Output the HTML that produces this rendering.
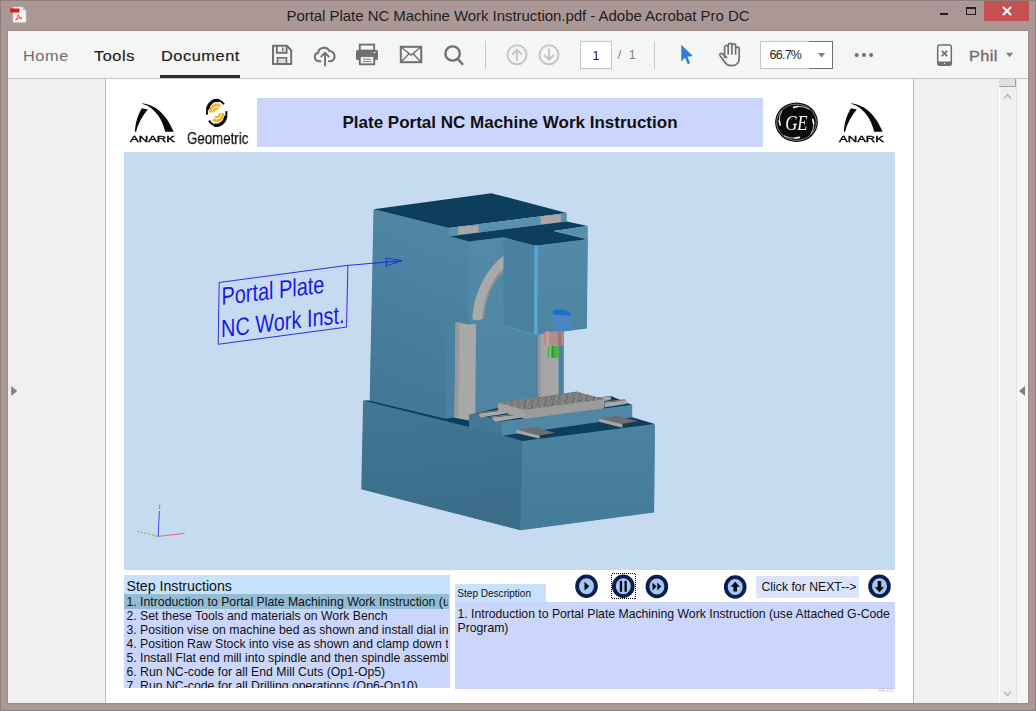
<!DOCTYPE html>
<html>
<head>
<meta charset="utf-8">
<title>Portal Plate NC Machine Work Instruction.pdf - Adobe Acrobat Pro DC</title>
<style>
*{box-sizing:border-box;margin:0;padding:0}
html,body{width:1036px;height:711px;overflow:hidden}
body{position:relative;background:#ab9896;font-family:"Liberation Sans",sans-serif;color:#1e1e1e}
.abs{position:absolute}
#frame{left:0;top:0;width:1036px;height:711px;border:1px solid #8e7f7d;background:#ab9896}
#title{left:0;top:0;width:1036px;height:31px;text-align:center;font-size:15px;line-height:31px;color:#1e1e1e;letter-spacing:-0.04px;white-space:nowrap}
#client{left:8px;top:31px;width:1020px;height:672px;background:#f0f0f0;overflow:hidden}
#clientb{left:7px;top:30px;width:1022px;height:674px;background:#9c8b89}
#toolbar{left:0;top:0;width:1020px;height:48px;background:#f5f5f5;border-bottom:1px solid #c6c6c6}
.tab{top:1px;height:47px;line-height:47.500px;font-size:15px;letter-spacing:0.5px;white-space:nowrap;transform:scaleX(1.090);transform-origin:0 50%}
.sep{top:10px;width:1px;height:28px;background:#c8c8c8}
#page{left:97px;top:48px;width:809px;height:624px;background:#fff;border-left:1px solid #b9b9b9;border-right:1px solid #b9b9b9}

#doc{left:0;top:0;width:1036px;height:703px;overflow:hidden;pointer-events:none}
.logo-t{white-space:nowrap;transform-origin:0 0;color:#111;line-height:1;will-change:transform}
#hdr{left:257px;top:98px;width:506px;height:49px;background:#cad6fe}
#hdrt{left:257px;top:98px;width:506px;height:49px;line-height:49px;font-weight:bold;font-size:17px;white-space:nowrap;color:#111;padding-left:85.500px}
.lb{background:#cbd6fc}
.row{position:absolute;left:0;width:324px;height:14.050px;line-height:14.050px;font-size:12.250px;white-space:nowrap;overflow:hidden;padding-left:2.500px;color:#111}
</style>
</head>
<body>
<div id="frame" class="abs"></div>
<div id="title" class="abs">Portal Plate NC Machine Work Instruction.pdf - Adobe Acrobat Pro DC</div>

<!-- title bar icon -->
<svg class="abs" style="left:9px;top:6px" width="18" height="18" viewBox="0 0 18 18">
  <path d="M4 1h9.500l3.500 3.500V16.500H4z" fill="#f4f4f4" stroke="#c9c3c2" stroke-width="0.6"/>
  <path d="M13.500 1v3.500h3.500z" fill="#c8c8c8"/>
  <rect x="1" y="2.5" width="9.5" height="4" fill="#e01b0c"/>
  <path d="M6.5 14.2c1.6-1.6 2.6-3.6 2.7-5.6M9.2 8.6c.5 2 1.800 3.200 3.600 3.500M6.500 14c1.800-1.300 4-2 6.300-1.900" fill="none" stroke="#e8302a" stroke-width="0.9"/>
</svg>

<!-- window controls -->
<div class="abs" style="left:940px;top:13px;width:8px;height:2px;background:#1e1e1e"></div>
<div class="abs" style="left:966px;top:7px;width:10px;height:8px;border:1px solid #1e1e1e;border-top-width:2px"></div>
<div class="abs" style="left:984px;top:1px;width:45px;height:20px;background:#c75050"></div>
<svg class="abs" style="left:1001px;top:5px" width="12" height="12" viewBox="0 0 12 12"><path d="M2 2l8 8M10 2l-8 8" stroke="#fff" stroke-width="2" fill="none"/></svg>

<div id="clientb" class="abs"></div>
<div id="client" class="abs">
  <div id="toolbar" class="abs">
    <div class="abs tab" style="left:14.500px;color:#6e6e6e">Home</div>
    <div class="abs tab" style="left:85.500px;color:#1e1e1e;-webkit-text-stroke:0.2px #1e1e1e">Tools</div>
    <div class="abs tab" style="left:152.500px;color:#1e1e1e;-webkit-text-stroke:0.2px #1e1e1e">Document</div>
    <div class="abs" style="left:152px;top:44px;width:80px;height:3px;background:#2c2c2c"></div>
    <div class="abs sep" style="left:477px"></div>
    <div class="abs sep" style="left:646px"></div>
    <div class="abs tab" style="left:961px;color:#707070;-webkit-text-stroke:0.4px #707070;letter-spacing:0.35px">Phil</div>
    <!-- save -->
    <svg class="abs" style="left:263px;top:13px" width="22" height="22" viewBox="271 44 22 22">
      <path d="M273 45.800h13.800l4.400 4.400v13.900h-18.200z" fill="none" stroke="#707070" stroke-width="2" stroke-linejoin="round"/>
      <path d="M276.800 46v6.800h9.800V46" fill="none" stroke="#707070" stroke-width="1.900"/>
      <rect x="282" y="47.500" width="1.500" height="3.500" fill="#707070"/>
      <rect x="277.500" y="57.800" width="9" height="6" fill="#dcdcdc" stroke="#707070" stroke-width="1.600"/>
    </svg>
    <!-- cloud upload -->
    <svg class="abs" style="left:305px;top:13px" width="24" height="24" viewBox="313 44 24 24">
      <path d="M320.500 61.200h-1.700a4.300 4.300 0 0 1-.6-8.500a6 6 0 0 1 11.300-1.700a5.200 5.200 0 0 1 1.200 10.200h-1.700" fill="none" stroke="#707070" stroke-width="2" stroke-linecap="round"/>
      <path d="M325 65.500v-12M321.200 56.600l3.800-3.900 3.800 3.900" fill="none" stroke="#707070" stroke-width="1.900" stroke-linecap="round" stroke-linejoin="round"/>
    </svg>
    <!-- print -->
    <svg class="abs" style="left:347px;top:12px" width="24" height="24" viewBox="355 43 24 24">
      <rect x="356" y="50" width="22" height="10" rx="1.500" fill="#707070"/>
      <rect x="359.800" y="44.600" width="14.400" height="6" fill="#f5f5f5" stroke="#707070" stroke-width="1.900"/>
      <rect x="359.800" y="56" width="14.400" height="8.300" fill="#f0f0f0" stroke="#707070" stroke-width="1.900"/>
      <path d="M363 59.200h8M363 61.500h8" stroke="#707070" stroke-width="0.900"/>
      <rect x="373.500" y="52" width="2" height="1" fill="#f5f5f5"/>
    </svg>
    <!-- mail -->
    <svg class="abs" style="left:391px;top:14px" width="24" height="20" viewBox="399 45 24 20">
      <rect x="400.800" y="46.800" width="20.400" height="15.400" fill="none" stroke="#707070" stroke-width="2"/>
      <path d="M401 47l10 8 10-8M401 62l8-8.300M421 62l-8-8.300" fill="none" stroke="#707070" stroke-width="1.400"/>
    </svg>
    <!-- search -->
    <svg class="abs" style="left:435px;top:12px" width="24" height="24" viewBox="443 43 24 24">
      <circle cx="452.600" cy="53.500" r="7.200" fill="none" stroke="#707070" stroke-width="2.300"/>
      <path d="M457.800 59l4.600 5" stroke="#707070" stroke-width="2.400" stroke-linecap="round"/>
    </svg>
    <!-- page up/down -->
    <svg class="abs" style="left:497px;top:12px" width="56" height="24" viewBox="505 43 56 24">
      <g fill="none" stroke="#c6c6c6" stroke-width="2" stroke-linecap="round" stroke-linejoin="round">
        <circle cx="517" cy="54.800" r="9.500"/>
        <path d="M517 60v-10M512.800 54l4.200-4.200 4.200 4.200"/>
        <circle cx="549" cy="54.800" r="9.500"/>
        <path d="M549 49.500v10M544.800 55.500l4.200 4.200 4.200-4.200"/>
      </g>
    </svg>
    <div class="abs" style="left:572px;top:10px;width:32px;height:28px;background:#fff;border:1px solid #c4c4c4;text-align:center;font-size:12.500px;line-height:28.500px;color:#1e1e1e">1</div>
    <div class="abs" style="left:609.800px;top:10px;height:28px;font-size:12.500px;line-height:28.500px;color:#808080;white-space:pre;letter-spacing:0.2px">/  1</div>
    <!-- cursor -->
    <svg class="abs" style="left:671px;top:12px" width="16" height="24" viewBox="679 43 16 24">
      <path d="M681.300 44.800V61.400L685 57.700l2.800 6.500 2.300-1-2.700-6.500 5.400-.6z" fill="#2d80d8"/>
    </svg>
    <!-- hand -->
    <svg class="abs" style="left:709px;top:11px" width="26" height="26" viewBox="717 42 26 26">
      <path d="M724.600 57.500V47.300a1.800 1.800 0 0 1 3.600 0V54M728.200 54V45.300a1.850 1.850 0 0 1 3.700 0V54M731.900 54V45.700a1.850 1.850 0 0 1 3.700 0V54M735.600 54V48.900a1.800 1.800 0 0 1 3.600 0V58c0 4.800-3 7.700-7.600 7.700c-3.600 0-5.500-1.400-7.100-4l-4.500-6.200c-.9-1.500.9-2.900 2.300-1.800l4.300 3.800" fill="none" stroke="#707070" stroke-width="1.700" stroke-linejoin="round" stroke-linecap="round"/>
    </svg>
    <!-- zoom box -->
    <div class="abs" style="left:752px;top:10px;width:73px;height:28px;background:#fff;border:1px solid #c4c4c4"></div>
    <div class="abs" style="left:801px;top:10px;width:24px;height:28px;border:1px solid #707070;border-left:none"></div>
    <div class="abs" style="left:761.500px;top:10px;height:28px;font-size:12.500px;line-height:28.500px;color:#1e1e1e;letter-spacing:-0.75px">66.7%</div>
    <svg class="abs" style="left:809px;top:21px" width="9" height="6" viewBox="0 0 9 6"><path d="M1 1h7.200L4.600 5.400z" fill="#808080"/></svg>
    <!-- more -->
    <svg class="abs" style="left:845px;top:20px" width="24" height="8" viewBox="853 51 24 8"><g fill="#707070"><circle cx="856.700" cy="55.100" r="2"/><circle cx="864" cy="55.100" r="2"/><circle cx="871.100" cy="55.100" r="2"/></g></svg>
    <!-- mobile -->
    <svg class="abs" style="left:928px;top:12px" width="18" height="24" viewBox="936 43 18 24">
      <rect x="937.700" y="45" width="13.600" height="20.200" rx="2" fill="#f5f5f5" stroke="#707070" stroke-width="1.500"/>
      <path d="M937.700 61.600h13.600v2a1.600 1.600 0 0 1-1.600 1.600h-10.400a1.600 1.600 0 0 1-1.600-1.600z" fill="#707070"/>
      <rect x="944" y="62.800" width="1" height="1.200" fill="#f5f5f5"/>
      <path d="M941.800 50.800l5.400 5.400M947.200 50.800l-5.400 5.400" stroke="#707070" stroke-width="1.700"/>
    </svg>
    <svg class="abs" style="left:997px;top:21px" width="9" height="6" viewBox="0 0 9 6"><path d="M1 0.800h7.200L4.600 5.200z" fill="#808080"/></svg>

  </div>
  <div id="page" class="abs"></div>
  <!-- side arrows and scrollbar -->
  <svg class="abs" style="left:3px;top:354px" width="7" height="12" viewBox="0 0 7 12"><path d="M0.200 1v10l6-5z" fill="#808080"/></svg>
  <div class="abs" style="left:991px;top:48px;width:18px;height:624px;background:#f0f0f0;border-left:1px solid #fff;border-right:1px solid #e4e4e4"></div>
  <div class="abs" style="left:1009px;top:48px;width:11px;height:624px;background:#f5f5f5"></div>
  <div class="abs" style="left:991px;top:48px;width:17px;height:8px;background:#e1e1e1;border-bottom:1px solid #a0a0a0;border-right:1px solid #a0a0a0"></div>
  <svg class="abs" style="left:995px;top:61px" width="9" height="8" viewBox="0 0 9 8"><path d="M1 6.500l3.500-3.800L8 6.500" fill="none" stroke="#bdbdbd" stroke-width="1.800"/></svg>
  <svg class="abs" style="left:995px;top:659px" width="9" height="8" viewBox="0 0 9 8"><path d="M1 1.500l3.500 3.800L8 1.500" fill="none" stroke="#bdbdbd" stroke-width="1.800"/></svg>
  <svg class="abs" style="left:1010px;top:354px" width="8" height="12" viewBox="0 0 8 12"><path d="M7 1v10l-6-5z" fill="#808080"/></svg>

</div>

<div id="doc" class="abs">
  <!-- header logos -->
  <svg class="abs" style="left:128px;top:100px" width="52" height="36" viewBox="128 100 52 36">
    <path d="M141.400 103.400C152 103.200 166 112 173.600 131.800L165.200 131.800C162.500 120 156 110.500 147.500 105.800Z" fill="#0a0a0a"/>
    <path d="M142 108.200L147.800 109.600C142.500 116 138 124 136.200 131.800L134.900 131.800C135.300 122.500 138 114.200 142 108.200Z" fill="#0a0a0a"/>
  </svg>
  <div class="abs logo-t" style="left:130.200px;top:135.200px;font-size:9px;-webkit-text-stroke:0.45px #111;transform:scaleX(1.450)">ANARK</div>
  <svg class="abs" style="left:203px;top:97px" width="28" height="32" viewBox="203 97 28 32">
    <path d="M207.00 114.57A9.8 12.7 0 0 1 223.98 104.30" fill="none" stroke="#0a0a0a" stroke-width="2"/>
    <path d="M207.43 109.56A9.6 12.5 0 0 1 219.18 100.73" fill="none" stroke="#0a0a0a" stroke-width="3.200"/>
    <path d="M226.40 111.03A9.8 12.7 0 0 1 208.98 120.62" fill="none" stroke="#0a0a0a" stroke-width="2"/>
    <path d="M225.97 116.04A9.6 12.5 0 0 1 214.22 124.87" fill="none" stroke="#0a0a0a" stroke-width="3.200"/>
    <path d="M210.40 112.52A6.3 8.0 0 0 1 220.31 106.25" fill="none" stroke="#f6b21a" stroke-width="2.800"/>
    <path d="M213.41 112.43A3.3 4.3 0 0 1 218.35 109.08" fill="none" stroke="#f6b21a" stroke-width="2.200"/>
    <path d="M223.00 113.08A6.3 8.0 0 0 1 213.09 119.35" fill="none" stroke="#f6b21a" stroke-width="2.800"/>
    <path d="M219.99 113.17A3.3 4.3 0 0 1 215.05 116.52" fill="none" stroke="#f6b21a" stroke-width="2.200"/>
  </svg>
  <div class="abs logo-t" style="left:186.600px;top:129.600px;font-size:17.400px;-webkit-text-stroke:0.25px #111;transform:scaleX(0.765)">Geometric</div>
  <div id="hdr" class="abs"></div>
  <div id="hdrt" class="abs">Plate Portal NC Machine Work Instruction</div>
  <svg class="abs" style="left:774px;top:100px;will-change:transform" width="46" height="46" viewBox="774 100 46 46">
    <ellipse cx="796.500" cy="122.300" rx="21.400" ry="19.700" fill="#0a0a0a"/>
    <ellipse cx="796.500" cy="122.300" rx="19.800" ry="18.100" fill="none" stroke="#d8d8d8" stroke-width="0.550"/>
    <g fill="none" stroke="#f4f4f4" stroke-linecap="round">
      <path d="M793.6 107.3L797.7 106.5" stroke-width="1.700"/>
      <path d="M797.7 106.5A18.500 17 0 0 1 808.8 108.8" stroke-width="0.800"/>
      <path d="M812.8 119.7L813.7 123.4" stroke-width="1.700"/>
      <path d="M813.7 123.4A18.500 17 0 0 1 811.2 133.6" stroke-width="0.800"/>
      <path d="M799.4 137.3L795.3 138.1" stroke-width="1.700"/>
      <path d="M795.3 138.1A18.500 17 0 0 1 784.2 135.8" stroke-width="0.800"/>
      <path d="M780.2 124.9L779.3 121.2" stroke-width="1.700"/>
      <path d="M779.3 121.2A18.500 17 0 0 1 781.8 111.0" stroke-width="0.800"/>
    </g>
    <text x="796.400" y="130" text-anchor="middle" font-family="'Liberation Serif','DejaVu Serif',serif" font-style="italic" font-size="22" fill="#fff" textLength="22.500" lengthAdjust="spacingAndGlyphs">GE</text>
  </svg>
  <svg class="abs" style="left:837px;top:100px" width="52" height="36" viewBox="128 100 52 36">
    <path d="M141.400 103.400C152 103.200 166 112 173.600 131.800L165.200 131.800C162.500 120 156 110.500 147.500 105.800Z" fill="#0a0a0a"/>
    <path d="M142 108.200L147.800 109.600C142.500 116 138 124 136.200 131.800L134.900 131.800C135.300 122.500 138 114.200 142 108.200Z" fill="#0a0a0a"/>
  </svg>
  <div class="abs logo-t" style="left:839.200px;top:135.200px;font-size:9px;-webkit-text-stroke:0.45px #111;transform:scaleX(1.450)">ANARK</div>

  <!--SCENE_START-->
  <svg class="abs" style="left:124px;top:152px" width="771" height="418" viewBox="124 152 771 418">
    <defs>
      <linearGradient id="gLeft" x1="0.200" y1="0" x2="0" y2="1">
        <stop offset="0" stop-color="#4f87a3"/><stop offset="1" stop-color="#417595"/>
      </linearGradient>
      <linearGradient id="gFront" x1="0" y1="0" x2="0" y2="1">
        <stop offset="0" stop-color="#538ba7"/><stop offset="1" stop-color="#4d84a1"/>
      </linearGradient>
      <linearGradient id="gHead" x1="0" y1="0" x2="0" y2="1">
        <stop offset="0" stop-color="#538ba7"/><stop offset="1" stop-color="#4d84a1"/>
      </linearGradient>
      <linearGradient id="gBaseL" x1="0" y1="0" x2="0.150" y2="1">
        <stop offset="0" stop-color="#427895"/><stop offset="1" stop-color="#3b6d89"/>
      </linearGradient>
      <linearGradient id="gBaseF" x1="0" y1="0" x2="0" y2="1">
        <stop offset="0" stop-color="#4b83a0"/><stop offset="1" stop-color="#447b98"/>
      </linearGradient>
      <pattern id="grid" width="5.200" height="2.600" patternUnits="userSpaceOnUse" patternTransform="matrix(1 -0.145 0.9 0.250 498 403)">
        <rect width="5.200" height="2.600" fill="#989898"/>
        <rect x="0.400" y="0.300" width="3.800" height="1.900" fill="#666"/>
      </pattern>
    </defs>
    <rect x="124" y="152" width="771" height="418" fill="#c6dbf0"/>

    <!-- backing silhouette to hide seams -->
    <polygon points="374,210 469,241 587.500,239.500 586.600,328 563.400,331 563.400,396 604,399.500 632,405 632,417.500 654.500,424.500 654,512 520.500,530 362,489.300 363.500,401 370,400.400" fill="#4d84a1"/>
    <!-- base -->
    <polygon points="363.100,400.400 522.600,440.500 520.500,530.300 361.300,489.300" fill="url(#gBaseL)"/>
    <polygon points="522.600,440.500 655,424.600 654.100,512.600 520.500,530.300" fill="url(#gBaseF)"/>
    <!-- base top (dark) -->
    <polygon points="363.100,400.400 369.700,400.400 445.200,418.400 454.500,417.600 469,420.500 469,426.900" fill="#0d3f5c"/>
    <polygon points="502.500,435.600 632.200,417.300 654.800,424 522.600,440.900" fill="#0d3f5c"/>

    <!-- column left face -->
    <polygon points="373.500,209.300 448.600,228 450,236.200 469.100,241.600 467.900,324.600 446.600,320.200 445.200,418.400 369.700,400.400" fill="url(#gLeft)"/>
    <!-- column front upper -->
    <polygon points="469.100,241.600 504,237.500 504,325.500 538.500,335 538.500,402 475.800,414 476.100,324 467.900,324.600" fill="url(#gFront)"/>
    <!-- column lower front & rails -->
    <polygon points="558.500,329 563.600,328.400 563.600,396 558.500,397" fill="#4b82a0"/>
    <polygon points="538,334 558.500,331 558.500,398 538,401" fill="#a6a6a6"/>
    <polygon points="538,334 541,334 541,401 538,401" fill="#979797"/>
    <polygon points="446.600,320.200 455.600,322 454.500,416.500 445.200,418.400" fill="#4b819f"/>
    <polygon points="455.600,322 467.900,324.600 476.100,324 475.300,413.500 469,414.700 469,420.500 454.500,417.600" fill="#a8a8a8"/>
    <polygon points="455.600,322 459.600,322.800 458.700,416 454.500,417.600" fill="#999"/>

    <!-- arch -->
    <path d="M472.500 319.600C473 300 482 272 504 255.600L504 272C492 281 485 300 484 318.600L478 320.300Z" fill="#a9a9a9"/>
    <path d="M504 268.500C491 279 484 299 482.200 319L484.200 318.600C485 300 492 281 504 272Z" fill="#8a8a8a"/>
    <!-- tops -->
    <polygon points="373.500,209.300 491.300,193.200 566.800,212.900 448.600,228" fill="#0d3f5c"/>
    <polygon points="448.600,228 566.800,212.900 566.800,221.400 450,236.200" fill="#5990ad"/>
    <polygon points="458.100,226.800 478.500,225.200 478.500,233.400 458.100,234.800" fill="#a9a8a7"/>
    <polygon points="540.600,216.200 561.100,214.200 561.100,223 540.600,225.200" fill="#a9a8a7"/>
    <polygon points="450,236.200 566.800,221.400 587.800,226 553.700,231 587.800,239.200 535.600,245.700 503.600,237.500 469.100,241.600" fill="#0d3f5c"/>
    <polygon points="553.700,231 587.800,226 587.800,239.200" fill="#5990ad"/>
    <!-- head -->
    <polygon points="503.600,237.500 535.600,245.700 535.200,334.500 503.200,325.500" fill="#4a819e"/>
    <path d="M503.200 325.500L535.200 334.500" stroke="#5b9abd" stroke-width="0.800" fill="none"/>
    <polygon points="535.600,245.700 587.800,239.200 586.900,328.400 535.200,335" fill="url(#gHead)"/>
    <polygon points="534.300,245.400 537.600,245.500 537.400,334.800 534.100,334.300" fill="#5ba8d8"/>
    <!-- spindle -->
    <polygon points="553,311 556,309.500 565,310 570.500,313 570.500,330.500 563.400,331.500 563.400,333 553,334" fill="#4a86c6"/>
    <polygon points="553,311 556,309.500 565,310 570.500,313 570.500,316 553,314.500" fill="#1f6fcc"/>
    <rect x="543.900" y="331.500" width="19.500" height="14.300" rx="1.500" fill="#b38d8b"/>
    <rect x="546" y="331.500" width="3" height="14.300" fill="#c29e9c"/>
    <rect x="558" y="331.500" width="3.500" height="14.300" fill="#9a7876"/>
    <rect x="547.500" y="346" width="11.500" height="12" rx="1.500" fill="#4fb04f"/>
    <rect x="552" y="346" width="2" height="12" fill="#3c963c"/>
    <rect x="549" y="346" width="2" height="12" fill="#6cc86c"/>

    <!-- saddle / table -->
    <polygon points="469,414.700 475.900,413 500.200,421.700 502.500,435.600 522.600,440.500 469,426.900" fill="#427795"/>
    <polygon points="475.900,413 498,408 525,418.800 500.200,421.700" fill="#0d3f5c"/>
    <polygon points="597,397.500 611,396 632.200,404.900 560,414.500" fill="#0d3f5c"/>
    <polygon points="500.200,421.700 632.200,404.900 632.200,417.300 502.500,435.600" fill="#5087a4"/>
    <!-- small rails -->
    <polygon points="478.800,413.600 504.300,410.300 506,413.600 480,417.600" fill="#a8a8a8"/>
    <polygon points="478.800,413.600 504.300,410.300 503,409.200 477,412.500" fill="#777"/>
    <polygon points="491,417.600 520,414.400 521,417.600 495.600,421.700" fill="#a8a8a8"/>
    <polygon points="491,417.600 520,414.400 518.500,413.200 489,416.500" fill="#777"/>
    <polygon points="599.800,397.400 610.800,396.200 610.800,399.700 604.400,400.900" fill="#a8a8a8"/>
    <polygon points="604.400,402.600 626.500,400.300 627,403.700 605,407.200" fill="#a8a8a8"/>
    <polygon points="604.400,402.600 626.500,400.300 624.500,399.300 603.500,401.500" fill="#777"/>
    <!-- table -->
    <polygon points="498,402.800 576.600,391.600 604.400,399.100 525.100,409.700" fill="url(#grid)"/>
    <polygon points="498,402.800 525.100,409.700 525.100,418.800 498,410.700" fill="#a2a2a2"/>
    <polygon points="525.100,409.700 604.400,399.100 604.400,408.400 525.100,418.800" fill="#9b9b9b"/>
    <!-- pads on base -->
    <polygon points="516.500,429.800 535,426.900 554.700,432.700 539.600,435.600" fill="#6e6e6e"/>
    <polygon points="516.500,429.800 539.600,435.600 539.600,438.800 516.500,432.900" fill="#a6a6a6"/>
    <polygon points="599.200,418.800 616,416.100 638,421.100 622.400,424" fill="#6e6e6e"/>
    <polygon points="599.200,418.800 622.400,424 622.400,427.700 599.200,421.700" fill="#a6a6a6"/>

    <!-- annotation -->
    <g fill="none" stroke="#1a1af0" stroke-width="0.900">
      <polygon points="219.200,282.500 347.900,265.300 346.500,327.100 218.200,344.300"/>
      <path d="M347.900 265.400L402 260.700"/>
      <path d="M385.500 258.100L402 260.600L385.600 266.300L387.200 261.800Z" stroke-width="0.800"/>
    </g>
    <g font-family="'Liberation Sans',sans-serif" font-size="25" fill="#1a1ae6">
      <text transform="matrix(0.797 -0.095 0 1 221.500 305)">Portal Plate</text>
      <text transform="matrix(0.797 -0.094 0 1 221 337.400)">NC Work Inst.</text>
    </g>
    <!-- triad -->
    <g fill="none">
      <path d="M158.300 536.400L137.300 531.300" stroke="#30d030" stroke-width="0.900" stroke-dasharray="2.500 1.500"/>
      <path d="M158.300 536.400L184.600 533.300" stroke="#f04848" stroke-width="0.800"/>
      <path d="M158.300 536.400L159.300 511" stroke="#4848f0" stroke-width="1"/>
      <path d="M159.400 509L159.900 504.400" stroke="#7070f0" stroke-width="0.800"/>
    </g>
  </svg>
<!--SCENE_END-->

  <!-- bottom panel -->
  <div class="abs" style="left:124px;top:575px;width:326px;height:113.300px;background:#cbd6fc;overflow:hidden">
    <div class="abs" style="left:0;top:0;width:326px;height:19px;background:#c8e1fd;font-size:14.150px;line-height:22.600px;padding-left:2.500px;white-space:nowrap;color:#111">Step Instructions</div>
    <div class="abs" style="left:0;top:19px;width:326px;height:95px;overflow:hidden">
      <div class="abs" style="left:0;top:0;width:325px;height:14.700px;background:#94bcd2"></div>
      <div class="row" style="top:0.900px">1. Introduction to Portal Plate Machining Work Instruction (use Attached G-Code Program)</div>
      <div class="row" style="top:14.950px">2. Set these Tools and materials on Work Bench</div>
      <div class="row" style="top:29.000px">3. Position vise on machine bed as shown and install dial indicator</div>
      <div class="row" style="top:43.050px">4. Position Raw Stock into vise as shown and clamp down tightly</div>
      <div class="row" style="top:57.100px">5. Install Flat end mill into spindle and then spindle assembly into machine</div>
      <div class="row" style="top:71.150px">6. Run NC-code for all End Mill Cuts (Op1-Op5)</div>
      <div class="row" style="top:85.200px">7. Run NC-code for all Drilling operations (Op6-Op10)</div>
    </div>
  </div>
  <div class="abs" style="left:455px;top:584px;width:91px;height:19px;background:#c8e1fd;font-size:10.050px;line-height:19px;padding-left:2.300px;white-space:nowrap;color:#111">Step Description</div>
  <div class="abs" style="left:455px;top:602px;width:440px;height:86.700px;background:#cbd6fc;font-size:12.220px;line-height:14.050px;padding:4.700px 0 0 2.500px;color:#111">1. Introduction to Portal Plate Machining Work Instruction (use Attached G-Code<br>Program)</div>
  <div class="abs" style="left:756px;top:576px;width:103px;height:22px;background:#dce4fd;font-size:12.250px;line-height:22.800px;padding-left:5.500px;white-space:nowrap;color:#111">Click for NEXT--&gt;</div>
  <svg class="abs" style="left:570px;top:570px" width="330" height="32" viewBox="570 570 330 32">
    <g stroke="#0c1d49" stroke-width="3.800" fill="#a3c7f6">
      <ellipse cx="586.500" cy="586.200" rx="9.400" ry="9.900"/>
      <ellipse cx="623.300" cy="586.200" rx="9.400" ry="9.900"/>
      <ellipse cx="656.900" cy="586.500" rx="9.400" ry="9.900"/>
      <ellipse cx="735.200" cy="587" rx="9.400" ry="9.900"/>
      <ellipse cx="879.500" cy="586.200" rx="9.400" ry="9.900"/>
    </g>
    <rect x="611.500" y="573.500" width="24" height="25" fill="none" stroke="#000" stroke-width="1" stroke-dasharray="1 1" shape-rendering="crispEdges"/>
    <g fill="#0a0a0a">
      <path d="M584.500 581.800l4.800 4.400-4.800 4.400z"/>
      <rect x="619.800" y="580.800" width="2.300" height="11"/><rect x="624.500" y="580.800" width="2.300" height="11"/>
      <path d="M652.500 582.500l4 4-4 4zM657.300 582.500l4 4-4 4z"/>
      <path d="M735.200 581.800l4.600 5h-2.800v4.700h-3.600v-4.700h-2.800z"/>
      <path d="M879.500 592.300l4.600-5h-2.800v-6.200h-3.600v6.200h-2.800z"/>
    </g>
  </svg>
  <div class="abs" style="left:878px;top:688px;font-size:5.600px;line-height:5px;color:#b8b8b8;white-space:nowrap;letter-spacing:-0.2px">V4.3.0</div>
</div>
</body>
</html>
